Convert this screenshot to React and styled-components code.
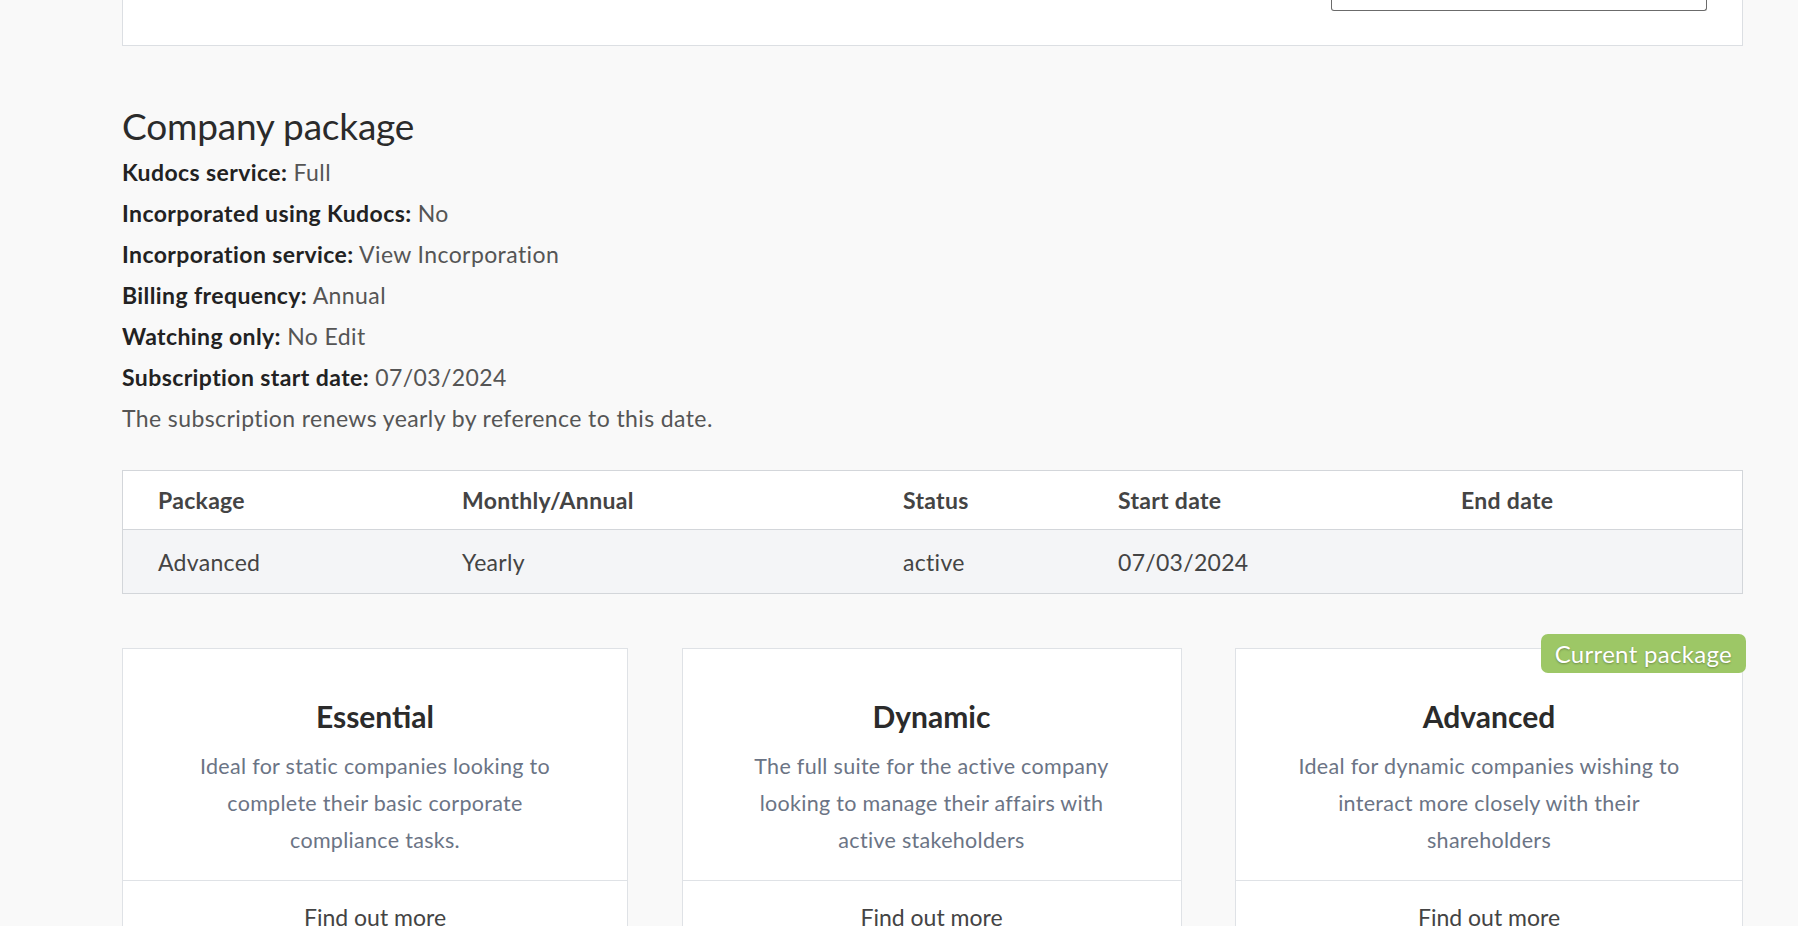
import React from "react";
import styled, { createGlobalStyle } from "styled-components";

const Global = createGlobalStyle`
  html, body { margin: 0; background: #f9f9f9; font-family: Lato, "Open Sans", sans-serif; color: #2b2b2b; }
`;
const Page = styled.div`padding: 0 55px 0 122px; height: 926px; overflow: hidden;`;
const TopCard = styled.div`
  height: 46px; background: #fff; border: 1px solid #dcdfe3; border-top: none; box-sizing: border-box;
  display: flex; justify-content: flex-end; align-items: flex-start; padding-right: 35px;
`;
const Input = styled.div`width: 374px; height: 10px; border: 1px solid #6b6b6b; border-top: none; border-radius: 0 0 3px 3px;`;
const Heading = styled.h2`font-size: 37px; font-weight: 400; margin: 58px 0 4px; line-height: 44px; color: #2b2b2b; letter-spacing: -0.2px;`;
const Line = styled.div`font-size: 23px; line-height: 41px; color: #555; letter-spacing: 0.4px;`;
const Label = styled.b`color: #222; font-weight: 700;`;
const Table = styled.div`margin-top: 31px; border: 1px solid #d3d6da; background: #fff;`;
const Row = styled.div`
  display: grid; grid-template-columns: 304px 441px 215px 343px 1fr; padding-left: 35px;
  height: ${p => p.$h}px; align-items: center; font-size: 23px; letter-spacing: 0.3px;
  background: ${p => p.$alt ? "#f4f5f7" : "#fff"};
  font-weight: ${p => p.$head ? 700 : 400}; color: #444;
  ${p => p.$alt && "border-top: 1px solid #d3d6da;"}
`;
const Cards = styled.div`display: grid; grid-template-columns: 506px 500px 508px; justify-content: space-between; margin-top: 54px;`;
const Card = styled.div`position: relative; background: #fff; border: 1px solid #dfe2e6;`;
const Body = styled.div`padding: 49px 30px 18px; text-align: center; height: 232px; box-sizing: border-box; border-bottom: 1px solid #dfe2e6;`;
const Title = styled.div`font-size: 30px; font-weight: 700; color: #2b2b2b; margin-bottom: 14px;`;
const Desc = styled.div`font-size: 21.5px; line-height: 37px; color: #6b7485; padding: 0 28px; letter-spacing: 0.3px;`;
const More = styled.div`text-align: center; font-size: 23px; color: #444; padding-top: 22px; height: 60px;`;
const Badge = styled.div`
  position: absolute; right: -4px; top: -15px; background: #9dc766; color: #fff; border-radius: 7px;
  font-size: 24px; padding: 5px 14px; text-shadow: 0 1px 2px rgba(0,0,0,.3); letter-spacing: 0.3px;
`;

const info = [
  ["Kudocs service:", "Full"], ["Incorporated using Kudocs:", "No"],
  ["Incorporation service:", "View Incorporation"], ["Billing frequency:", "Annual"],
  ["Watching only:", "No Edit"], ["Subscription start date:", "07/03/2024"],
];
const cards = [
  ["Essential", "Ideal for static companies looking to complete their basic corporate compliance tasks."],
  ["Dynamic", "The full suite for the active company looking to manage their affairs with active stakeholders"],
  ["Advanced", "Ideal for dynamic companies wishing to interact more closely with their shareholders", true],
];

export default function App() {
  return (
    <Page>
      <Global />
      <TopCard><Input /></TopCard>
      <Heading>Company package</Heading>
      {info.map(([l, v]) => <Line key={l}><Label>{l}</Label> {v}</Line>)}
      <Line>The subscription renews yearly by reference to this date.</Line>
      <Table>
        <Row $h={58} $head><span>Package</span><span>Monthly/Annual</span><span>Status</span><span>Start date</span><span>End date</span></Row>
        <Row $h={63} $alt><span>Advanced</span><span>Yearly</span><span>active</span><span>07/03/2024</span><span></span></Row>
      </Table>
      <Cards>
        {cards.map(([t, d, cur]) => (
          <Card key={t}>
            {cur && <Badge>Current package</Badge>}
            <Body><Title>{t}</Title><Desc>{d}</Desc></Body>
            <More>Find out more</More>
          </Card>
        ))}
      </Cards>
    </Page>
  );
}
